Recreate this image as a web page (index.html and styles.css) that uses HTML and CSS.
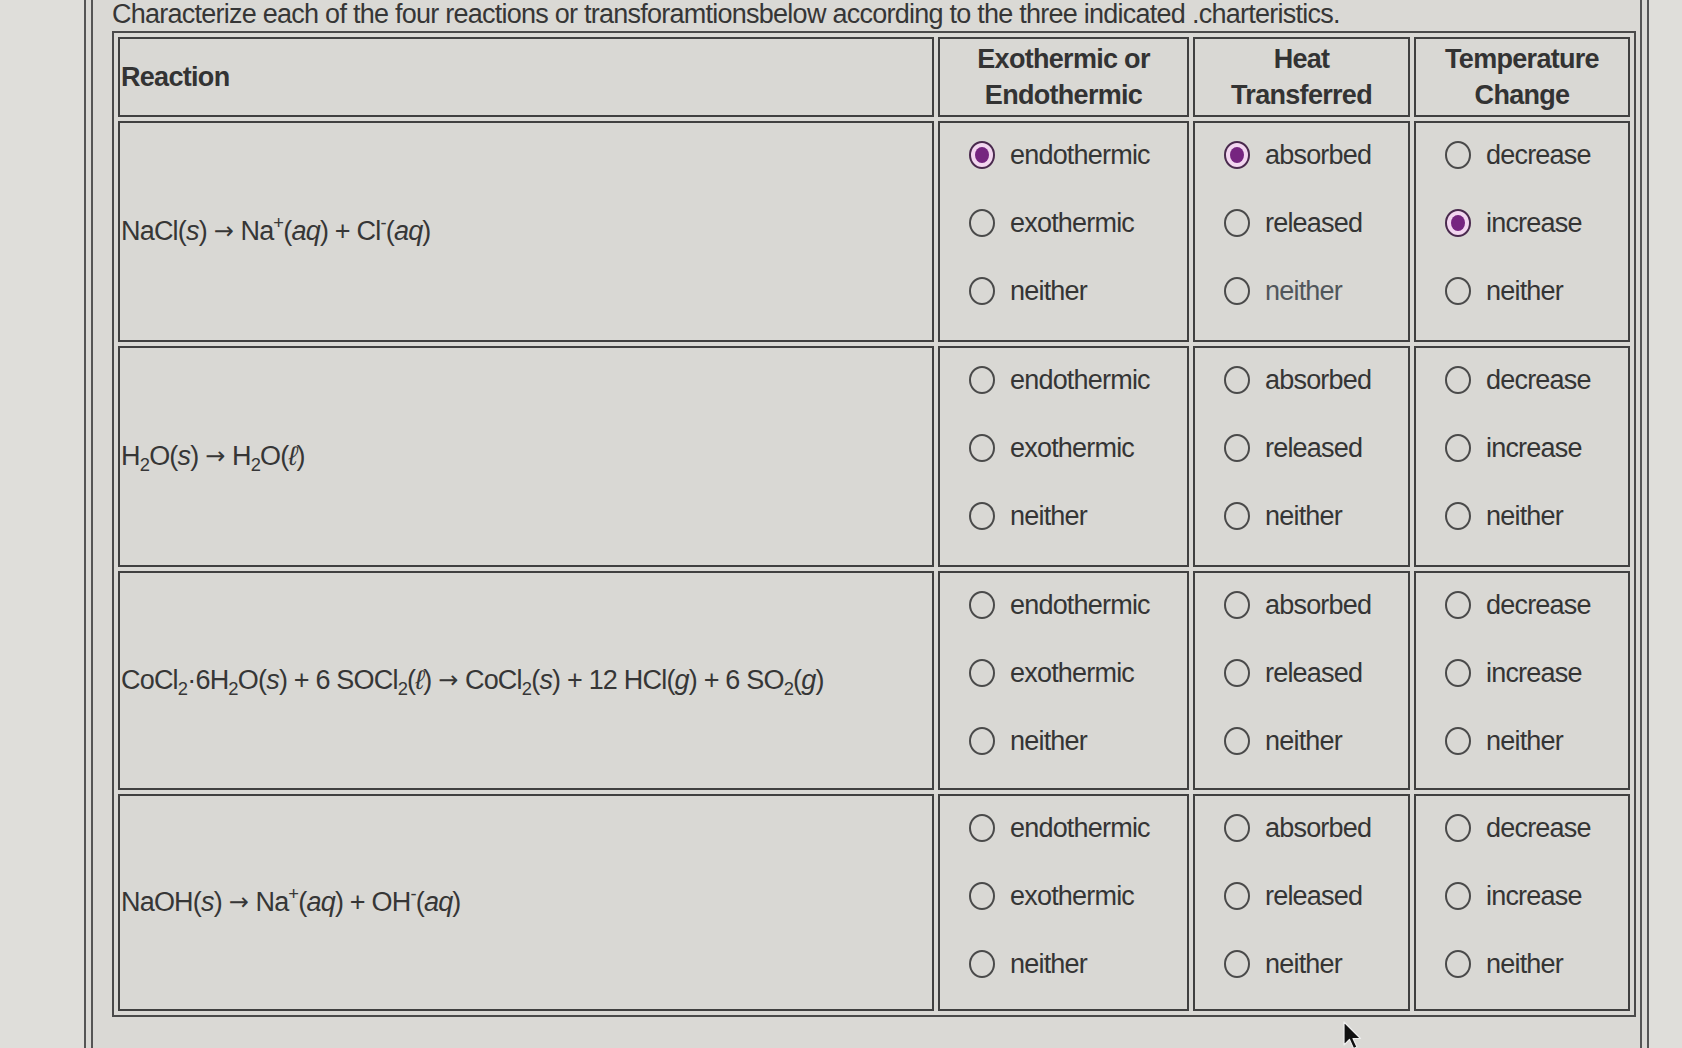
FILE: index.html
```html
<!DOCTYPE html>
<html lang="en">
<head>
<meta charset="utf-8">
<title>Characterize reactions</title>
<link rel="stylesheet" href="styles.css">
</head>
<body>
<div class="outer">
  <div class="inner">
    <p class="title">Characterize each of the four reactions or transforamtionsbelow according to the three indicated .charteristics.</p>
    <div class="grid">
      <div class="cell head head-left">Reaction</div>
      <div class="cell head">Exothermic or<br>Endothermic</div>
      <div class="cell head">Heat<br>Transferred</div>
      <div class="cell head">Temperature<br>Change</div>

      <div class="cell rx"><span class="eq">NaCl(<i>s</i>) <span class="arr">→</span> Na<sup>+</sup>(<i>aq</i>) + Cl<sup>-</sup>(<i>aq</i>)</span></div>
      <div class="cell opts">
        <div class="opt"><span class="radio on"></span>endothermic</div>
        <div class="opt"><span class="radio"></span>exothermic</div>
        <div class="opt"><span class="radio"></span>neither</div>
      </div>
      <div class="cell opts">
        <div class="opt"><span class="radio on"></span>absorbed</div>
        <div class="opt"><span class="radio"></span>released</div>
        <div class="opt faded"><span class="radio"></span>neither</div>
      </div>
      <div class="cell opts">
        <div class="opt"><span class="radio"></span>decrease</div>
        <div class="opt"><span class="radio on"></span>increase</div>
        <div class="opt"><span class="radio"></span>neither</div>
      </div>

      <div class="cell rx"><span class="eq">H<sub>2</sub>O(<i>s</i>) <span class="arr">→</span> H<sub>2</sub>O(<i>ℓ</i>)</span></div>
      <div class="cell opts">
        <div class="opt"><span class="radio"></span>endothermic</div>
        <div class="opt"><span class="radio"></span>exothermic</div>
        <div class="opt"><span class="radio"></span>neither</div>
      </div>
      <div class="cell opts">
        <div class="opt"><span class="radio"></span>absorbed</div>
        <div class="opt"><span class="radio"></span>released</div>
        <div class="opt"><span class="radio"></span>neither</div>
      </div>
      <div class="cell opts">
        <div class="opt"><span class="radio"></span>decrease</div>
        <div class="opt"><span class="radio"></span>increase</div>
        <div class="opt"><span class="radio"></span>neither</div>
      </div>

      <div class="cell rx"><span class="eq">CoCl<sub>2</sub>·6H<sub>2</sub>O(<i>s</i>) + 6 SOCl<sub>2</sub>(<i>ℓ</i>) <span class="arr">→</span> CoCl<sub>2</sub>(<i>s</i>) + 12 HCl(<i>g</i>) + 6 SO<sub>2</sub>(<i>g</i>)</span></div>
      <div class="cell opts">
        <div class="opt"><span class="radio"></span>endothermic</div>
        <div class="opt"><span class="radio"></span>exothermic</div>
        <div class="opt"><span class="radio"></span>neither</div>
      </div>
      <div class="cell opts">
        <div class="opt"><span class="radio"></span>absorbed</div>
        <div class="opt"><span class="radio"></span>released</div>
        <div class="opt"><span class="radio"></span>neither</div>
      </div>
      <div class="cell opts">
        <div class="opt"><span class="radio"></span>decrease</div>
        <div class="opt"><span class="radio"></span>increase</div>
        <div class="opt"><span class="radio"></span>neither</div>
      </div>

      <div class="cell rx"><span class="eq">NaOH(<i>s</i>) <span class="arr">→</span> Na<sup>+</sup>(<i>aq</i>) + OH<sup>-</sup>(<i>aq</i>)</span></div>
      <div class="cell opts">
        <div class="opt"><span class="radio"></span>endothermic</div>
        <div class="opt"><span class="radio"></span>exothermic</div>
        <div class="opt"><span class="radio"></span>neither</div>
      </div>
      <div class="cell opts">
        <div class="opt"><span class="radio"></span>absorbed</div>
        <div class="opt"><span class="radio"></span>released</div>
        <div class="opt"><span class="radio"></span>neither</div>
      </div>
      <div class="cell opts">
        <div class="opt"><span class="radio"></span>decrease</div>
        <div class="opt"><span class="radio"></span>increase</div>
        <div class="opt"><span class="radio"></span>neither</div>
      </div>
    </div>
  </div>
</div>
<svg class="cursor" width="22" height="30" viewBox="0 0 22 30" aria-hidden="true">
  <path d="M2 1 L2 24 L7.5 18.5 L11.5 27.5 L15 26 L11 17.5 L18.5 17.5 Z" fill="#111" stroke="#eee" stroke-width="1.2" stroke-linejoin="round"/>
</svg>
</body>
</html>
```

FILE: styles.css
```css
html, body {
  margin: 0;
  padding: 0;
}

body {
  background: #dfdeda;
  font-family: "Liberation Sans", Arial, sans-serif;
  color: #353535;
  height: 1048px;
  overflow: hidden;
  position: relative;
}

.outer {
  margin-left: 84px;
  width: 1565px;
  height: 1048px;
  border-left: 2px solid #555;
  border-right: 2px solid #555;
  padding: 0 5px;
  box-sizing: border-box;
  background: #dad9d5;
}

.inner {
  height: 100%;
  border-left: 2px solid #555;
  border-right: 2px solid #555;
  padding-left: 19px;
  box-sizing: border-box;
}

.title {
  margin: 0;
  font-size: 27px;
  line-height: 29px;
  letter-spacing: -0.75px;
  color: #363636;
  white-space: nowrap;
}

.grid {
  margin-top: 2px;
  display: grid;
  grid-template-columns: 816px 251px 217px 216px;
  grid-template-rows: 80px 221px 221px 219px 217px;
  gap: 4px;
  padding: 4px;
  border: 2px solid #4a4a4a;
  width: max-content;
}

.cell {
  border: 2px solid #404040;
  background: #d9d8d4;
  box-sizing: border-box;
}

.head {
  font-weight: bold;
  font-size: 27px;
  letter-spacing: -0.7px;
  line-height: 36px;
  text-align: center;
  display: flex;
  align-items: center;
  justify-content: center;
  color: #333;
}

.head-left {
  justify-content: flex-start;
  padding-left: 1px;
}

.rx {
  font-size: 27px;
  letter-spacing: -0.8px;
  display: flex;
  align-items: center;
  padding-left: 1px;
  white-space: nowrap;
  color: #363636;
}

.rx i {
  font-style: italic;
}

.arr {
  display: inline-block;
  font-family: "DejaVu Sans", sans-serif;
  font-size: 24px;
  letter-spacing: 0;
  position: relative;
  top: -1px;
}

.rx sub, .rx sup {
  font-size: 0.68em;
  line-height: 0;
  position: relative;
  vertical-align: baseline;
}

.rx sub {
  top: 0.3em;
}

.rx sup {
  top: -0.62em;
}

.opts {
  display: flex;
  flex-direction: column;
  gap: 40px;
  padding: 18px 0 0 29px;
}

.opt {
  display: flex;
  align-items: center;
  font-size: 27px;
  letter-spacing: -0.8px;
  line-height: 28px;
  height: 28px;
  color: #353535;
}

.opt.faded {
  color: #51565b;
}

.radio {
  width: 26px;
  height: 28px;
  border: 2px solid #4a4a4a;
  border-radius: 50%;
  box-sizing: border-box;
  margin-right: 15px;
  flex: none;
  position: relative;
}

.radio.on {
  border-color: #4a2a4e;
  background: #f3d6f0;
}

.radio.on::after {
  content: "";
  position: absolute;
  left: 4px;
  top: 4px;
  width: 14px;
  height: 16px;
  border-radius: 50%;
  background: #762580;
}

.cursor {
  position: absolute;
  left: 1342px;
  top: 1021px;
}
```
